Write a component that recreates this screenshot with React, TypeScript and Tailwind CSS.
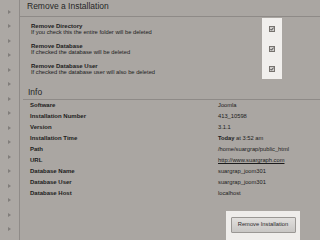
const arrows = Array.from({ length: 16 });

const removeOptions = [
  { title: "Remove Directory", desc: "If you check this the entire folder will be deleted" },
  { title: "Remove Database", desc: "If checked the database will be deleted" },
  { title: "Remove Database User", desc: "If checked the database user will also be deleted" },
];

const infoRows: { label: string; value: React.ReactNode }[] = [
  { label: "Software", value: "Joomla" },
  { label: "Installation Number", value: "413_10598" },
  { label: "Version", value: "3.1.1" },
  {
    label: "Installation Time",
    value: (
      <>
        <span className="font-bold">Today</span> at 3:52 am
      </>
    ),
  },
  { label: "Path", value: "/home/suargrap/public_html" },
  { label: "URL", value: <span className="underline">http://www.suargraph.com</span> },
  { label: "Database Name", value: "suargrap_joom301" },
  { label: "Database User", value: "suargrap_joom301" },
  { label: "Database Host", value: "localhost" },
];

function Checkbox() {
  return (
    <div className="w-[6px] h-[6px] border border-[#77736f] bg-[#cfcdcb] flex items-center justify-center">
      <svg width="4" height="4" viewBox="0 0 4 4">
        <path d="M0.5 2 L1.5 3.2 L3.6 0.6" stroke="#2a2a2a" strokeWidth="0.8" fill="none" />
      </svg>
    </div>
  );
}

export default function App() {
  return (
    <div
      className="w-[320px] h-[240px] overflow-hidden flex bg-[#aaa6a2] text-[#1c1c1c]"
      style={{ fontFamily: '"Liberation Sans", Arial, sans-serif' }}
    >
      <div className="w-[20px] shrink-0 bg-[#aca8a4] border-r border-[#8f8b88] flex flex-col items-center pt-[4.5px]">
        {arrows.map((_, i) => (
          <div key={i} className="h-[14.5px] flex items-center">
            <svg width="3" height="4" viewBox="0 0 3 4">
              <path d="M0 0 L3 2 L0 4 Z" fill="#817e7b" />
            </svg>
          </div>
        ))}
      </div>

      <div className="flex-1 flex flex-col">
        <div className="h-[17px] pt-[1px] pl-[7px] border-b border-[#8e8a87] text-[8.5px] leading-[10px] text-[#262626]">
          Remove a Installation
        </div>

        <div className="mt-[1px] h-[64px] flex">
          <div className="flex-1 pl-[11px] pt-[5.9px] flex flex-col gap-[8px]">
            {removeOptions.map((o) => (
              <div key={o.title}>
                <div className="text-[6px] leading-[6px] font-bold">{o.title}</div>
                <div className="text-[5.75px] leading-[6px]">{o.desc}</div>
              </div>
            ))}
          </div>
          <div className="w-[20px] mr-[37.7px] bg-[#f1efed] pt-[5.9px] flex flex-col gap-[8px]">
            {removeOptions.map((o) => (
              <div key={o.title} className="h-[12px] flex items-center justify-center">
                <Checkbox />
              </div>
            ))}
          </div>
        </div>

        <div className="mt-[6.8px] h-[14px] pt-[1px] pl-[5px] ml-[3px] border-b border-[#8e8a87] text-[8.5px] leading-[10px] text-[#262626]">
          Info
        </div>

        <div className="flex flex-col">
          {infoRows.map((r) => (
            <div key={r.label} className="h-[11px] flex items-center">
              <div className="w-[198px] pl-[10px] text-[6px] font-bold">{r.label}</div>
              <div className="text-[5.75px]">{r.value}</div>
            </div>
          ))}
        </div>

        <div className="mt-[12px] self-end mr-[20px] w-[74px] h-[30px] bg-[#efedeb] pt-[6px] px-[4.5px]">
          <div className="h-[16px] w-[65px] border border-[#9a9794] rounded-[1px] bg-gradient-to-b from-[#e2e0de] to-[#c8c6c4] flex items-center justify-center text-[5.75px] text-[#2a2a2a]">
            Remove Installation
          </div>
        </div>
      </div>
    </div>
  );
}
